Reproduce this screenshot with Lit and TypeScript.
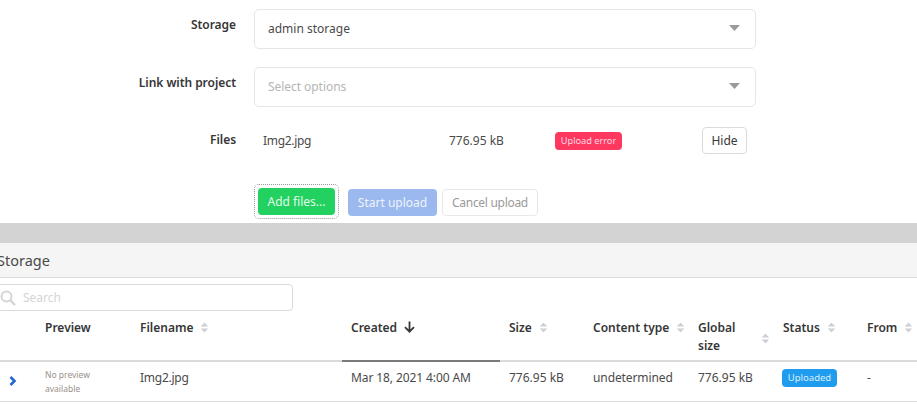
import { LitElement, html, css } from "lit";
import { customElement } from "lit/decorators.js";

const sorter = html`<svg class="sort" width="9" height="11" viewBox="0 0 9 11"><path d="M4.5 0.5L8.2 4.5H0.8Z M4.5 10.5L0.8 6.5H8.2Z" fill="#ccd0d5"/></svg>`;
const caret = html`<svg class="caret" width="11" height="6" viewBox="0 0 11 6"><path d="M0 0H11L5.5 6Z" fill="#9a9a9a"/></svg>`;

@customElement("app-root")
export class AppRoot extends LitElement {
  static styles = css`
    :host {
      display: block;
      width: 917px;
      height: 404px;
      overflow: hidden;
      background: #fff;
      font-family: "Noto Sans", sans-serif;
      font-size: 12px;
      color: #4a4a4a;
    }
    .form { height: 223px; padding-top: 9px; box-sizing: border-box; }
    .row { display: grid; grid-template-columns: 236px 502px; column-gap: 18px; margin-bottom: 18px; }
    .label { text-align: right; font-weight: 600; color: #363636; line-height: 20px; padding-top: 6px; letter-spacing: -0.05px; }
    .select {
      height: 40px; box-sizing: border-box; border: 1px solid #e6e6e6; border-radius: 5px;
      display: flex; align-items: center; justify-content: space-between; padding: 0 15px 2px 13px;
    }
    .select .ph { color: #b5b5b5; letter-spacing: -0.05px; }
    .caret { margin-top: -1px; }
    .files { display: grid; grid-template-columns: 236px 1fr; column-gap: 27px; height: 27px; margin-top: 20px; align-items: center; }
    .files .label { padding-top: 0; padding-bottom: 1px; }
    .file { display: flex; align-items: center; width: 484px; }
    .file .name { width: 186px; padding-bottom: 1px; letter-spacing: -0.3px; }
    .file .size { width: 106px; padding-bottom: 1px; }
    .tag-err {
      background: #ff3860; color: #ffd9e1; border-radius: 4px; font-size: 9.2px; height: 18px; width: 67px;
      display: flex; align-items: center; justify-content: center;
    }
    .hide {
      margin-left: auto; width: 45px; height: 27px; box-sizing: border-box; border: 1px solid #dbdbdb; border-radius: 4px;
      display: flex; align-items: center; justify-content: center; color: #363636; font-size: 12px;
    }
    .actions { display: flex; align-items: center; margin: 32px 0 0 254px; }
    .focus { border: 1px dotted #999; border-radius: 5px; padding: 3px; height: 27px; display: flex; margin-top: -2px; }
    .btn { height: 27px; border-radius: 4px; display: flex; align-items: center; justify-content: center; box-sizing: border-box; font-size: 12px; }
    .add { background: #23d160; color: #e2fbea; width: 77px; }
    .start { background: #9bb9ee; color: #eef3fc; width: 89px; margin-left: 9px; }
    .cancel { border: 1px solid #e8e8e8; color: #9a9a9a; width: 96px; margin-left: 5px; letter-spacing: -0.3px; }
    .bar { height: 20px; background: #d3d3d3; }
    .title { height: 35px; box-sizing: border-box; background: #f5f5f5; border-bottom: 1px solid #dbdbdb; line-height: 35px; font-size: 14.5px; color: #4a4a4a; overflow: hidden; }
    .title span { display: block; margin-left: -3px; }
    .search { margin: 6px 0 0 -8px; width: 301px; height: 27px; box-sizing: border-box; border: 1px solid #dbdbdb; border-radius: 4px; display: flex; align-items: center; gap: 6px; padding-left: 7px; color: #d5d5d5; font-size: 12px; }
    .search span { margin-left: 1px; }
    .grid { display: grid; grid-template-columns: 36px 95px 211px 158px 84px 105px 85px 84px 59px; }
    .th { height: 51px; box-sizing: border-box; border-bottom: 2px solid #dbdbdb; padding: 8px 0 0 9px; font-weight: 600; font-size: 12px; color: #363636; line-height: 18px; display: flex; gap: 7px; }
    .th.active { border-bottom-color: #7a7a7a; }
    .th .sort { margin-top: 3px; flex: none; }
    .th.global .gl { width: 46px; }
    .th.global .sort { margin-top: 14px; margin-left: 10px; }
    .td { height: 40px; box-sizing: border-box; border-bottom: 1px solid #dbdbdb; padding: 7px 0 0 9px; font-size: 12px; line-height: 18px; }
    .tight { letter-spacing: -0.1px; }
    .img { letter-spacing: -0.25px; }
    .chev { padding: 11px 0 0 9px; }
    .np { font-size: 8.5px; color: #9a8f8a; line-height: 14px; padding-top: 6px; }
    .up { background: #209cee; color: #d8eefc; border-radius: 4px; height: 18px; width: 55px; font-size: 9.5px; display: flex; align-items: center; justify-content: center; margin-left: -1px; }
    .arrow { margin-top: 2px; }
  `;

  render() {
    return html`
      <div class="form">
        <div class="row"><div class="label">Storage</div><div class="select"><span>admin storage</span>${caret}</div></div>
        <div class="row"><div class="label">Link with project</div><div class="select"><span class="ph">Select options</span>${caret}</div></div>
        <div class="files">
          <div class="label">Files</div>
          <div class="file"><span class="name">Img2.jpg</span><span class="size">776.95 kB</span><span class="tag-err">Upload error</span><span class="hide">Hide</span></div>
        </div>
        <div class="actions">
          <div class="focus"><div class="btn add">Add files...</div></div>
          <div class="btn start">Start upload</div>
          <div class="btn cancel">Cancel upload</div>
        </div>
      </div>
      <div class="bar"></div>
      <div class="title"><span>Storage</span></div>
      <div class="search">
        <svg width="16" height="16" viewBox="0 0 16 16"><circle cx="6.5" cy="6.5" r="5" fill="none" stroke="#d5d5d5" stroke-width="2"/><path d="M10.2 10.2L15 15" stroke="#d5d5d5" stroke-width="2.4"/></svg>
        <span>Search</span>
      </div>
      <div class="grid">
        <div class="th"></div>
        <div class="th">Preview</div>
        <div class="th">Filename ${sorter}</div>
        <div class="th active">Created
          <svg class="arrow" width="11" height="12" viewBox="0 0 11 12"><path d="M5.5 0.5V10.5M1 6.2L5.5 10.7L10 6.2" fill="none" stroke="#363636" stroke-width="1.8"/></svg>
        </div>
        <div class="th">Size ${sorter}</div>
        <div class="th">Content type ${sorter}</div>
        <div class="th global"><span class="gl">Global size</span>${sorter}</div>
        <div class="th">Status ${sorter}</div>
        <div class="th">From ${sorter}</div>

        <div class="td chev"><svg width="8" height="10" viewBox="0 0 8 10"><path d="M1.5 1L5.5 5L1.5 9" fill="none" stroke="#2366d1" stroke-width="2.6"/></svg></div>
        <div class="td np">No preview<br />available</div>
        <div class="td img">Img2.jpg</div>
        <div class="td tight">Mar 18, 2021 4:00 AM</div>
        <div class="td">776.95 kB</div>
        <div class="td tight">undetermined</div>
        <div class="td">776.95 kB</div>
        <div class="td"><div class="up">Uploaded</div></div>
        <div class="td">-</div>
      </div>
    `;
  }
}
